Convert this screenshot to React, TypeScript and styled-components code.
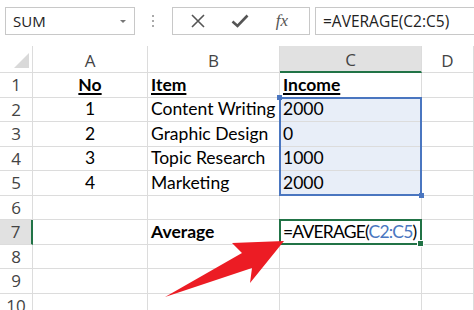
import React from 'react';
import styled, { createGlobalStyle } from 'styled-components';

const GlobalStyle = createGlobalStyle`
  html, body {
    margin: 0;
    padding: 0;
    background: #ffffff;
  }
  body {
    width: 474px;
    height: 310px;
    overflow: hidden;
    font-family: 'Lato', 'Liberation Sans', sans-serif;
  }
`;

const Colors = {
  grid: '#dcdcdc',
  headerText: '#444444',
  headerSelected: '#e1e1e1',
  green: '#217346',
  blue: '#4a76c0',
  selectionFill: '#e8eef8',
  toolbarBorder: '#c8c8c8',
};

const uiFont = `'Open Sans', 'Noto Sans', 'Liberation Sans', sans-serif`;

const Page = styled.div`
  position: relative;
  width: 474px;
  height: 310px;
  overflow: hidden;
`;

/* ---------- formula bar ---------- */

const Toolbar = styled.div`
  display: flex;
  align-items: center;
  height: 46px;
  padding: 7px 0 11px 5px;
  box-sizing: border-box;
`;

const NameBox = styled.div`
  display: flex;
  align-items: center;
  justify-content: space-between;
  width: 130px;
  height: 28px;
  padding: 0 8px 0 7px;
  box-sizing: border-box;
  border: 1px solid ${Colors.toolbarBorder};
  font-family: ${uiFont};
  font-size: 15px;
  color: #222;
`;

const Caret = styled.span`
  width: 0;
  height: 0;
  border-left: 3px solid transparent;
  border-right: 3px solid transparent;
  border-top: 3px solid #777;
`;

const Grip = styled.div`
  display: flex;
  flex-direction: column;
  gap: 3px;
  margin: 0 18px 0 17px;
`;

const GripDot = styled.span`
  width: 2px;
  height: 2px;
  background: #aaa;
`;

const ButtonGroup = styled.div`
  display: flex;
  align-items: center;
  justify-content: space-around;
  width: 138px;
  height: 28px;
  padding: 0 6px 0 4px;
  box-sizing: border-box;
  border: 1px solid ${Colors.toolbarBorder};
`;

const IconSlot = styled.span`
  display: flex;
  align-items: center;
  justify-content: center;
  width: 30px;
  color: #555;
`;

const Fx = styled.span`
  font-family: 'Liberation Serif', 'DejaVu Serif', serif;
  font-style: italic;
  font-size: 17px;
  color: #555;
`;

const FormulaInput = styled.div`
  flex: 1;
  display: flex;
  align-items: center;
  height: 28px;
  margin-left: 5px;
  padding-left: 7px;
  box-sizing: border-box;
  border: 1px solid ${Colors.toolbarBorder};
  border-right: none;
  font-family: ${uiFont};
  font-size: 15.5px;
  color: #222;
  white-space: nowrap;
  overflow: hidden;
`;

/* ---------- sheet ---------- */

const Sheet = styled.div`
  display: grid;
  grid-template-columns: 33px 115px 132px 142px 1fr;
  grid-template-rows: 27px;
  grid-auto-rows: 24.5px;
`;

const Corner = styled.div`
  grid-row: 1;
  grid-column: 1;
  position: relative;
  border-right: 1px solid ${Colors.grid};
  border-bottom: 1px solid ${Colors.grid};
  box-sizing: border-box;

  &::after {
    content: '';
    position: absolute;
    right: 3px;
    bottom: 4px;
    width: 0;
    height: 0;
    border-left: 15px solid transparent;
    border-bottom: 15px solid #d9d9d9;
  }
`;

const ColHeader = styled.div<{ $col: number; $active?: boolean }>`
  grid-row: 1;
  grid-column: ${(p) => p.$col};
  display: flex;
  align-items: center;
  justify-content: center;
  box-sizing: border-box;
  background: ${(p) => (p.$active ? Colors.headerSelected : '#fff')};
  border-right: 1px solid ${Colors.grid};
  border-bottom: ${(p) =>
    p.$active ? `2px solid ${Colors.green}` : `1px solid ${Colors.grid}`};
  font-family: ${uiFont};
  font-size: 17px;
  color: ${Colors.headerText};
  padding-top: 2px;
`;

const RowHeader = styled.div<{ $row: number; $active?: boolean }>`
  grid-row: ${(p) => p.$row};
  grid-column: 1;
  display: flex;
  align-items: center;
  justify-content: center;
  box-sizing: border-box;
  background: ${(p) => (p.$active ? Colors.headerSelected : '#fff')};
  border-right: ${(p) =>
    p.$active ? `2px solid ${Colors.green}` : `1px solid ${Colors.grid}`};
  border-bottom: 1px solid ${Colors.grid};
  font-family: ${uiFont};
  font-size: 17px;
  color: ${Colors.headerText};
`;

const Cell = styled.div<{
  $row: number;
  $col: number;
  $align?: 'left' | 'center';
  $bold?: boolean;
  $underline?: boolean;
  $selected?: boolean;
}>`
  grid-row: ${(p) => p.$row};
  grid-column: ${(p) => p.$col};
  display: flex;
  align-items: flex-end;
  justify-content: ${(p) => (p.$align === 'center' ? 'center' : 'flex-start')};
  box-sizing: border-box;
  padding: 0 3px 1px;
  background: ${(p) => (p.$selected ? Colors.selectionFill : '#fff')};
  border-right: 1px solid ${Colors.grid};
  border-bottom: 1px solid ${Colors.grid};
  font-size: 17.5px;
  line-height: 22px;
  font-weight: ${(p) => (p.$bold ? 700 : 400)};
  text-decoration: ${(p) => (p.$underline ? 'underline' : 'none')};
  text-underline-offset: 2px;
  text-decoration-thickness: 2px;
  color: #000;
  white-space: nowrap;
  overflow: visible;
`;

const RangeOutline = styled.div`
  grid-column: 4;
  grid-row: 3 / 7;
  position: relative;
  margin: -1px 0 0 -1px;
  border: 2px solid ${Colors.blue};
  pointer-events: none;
`;

const Handle = styled.span<{ $pos: 'tl' | 'br' }>`
  position: absolute;
  width: 5px;
  height: 5px;
  background: ${Colors.blue};
  ${(p) => (p.$pos === 'tl' ? 'top: -4px; left: -4px;' : 'bottom: -4px; right: -4px;')}
`;

const ActiveOutline = styled.div`
  grid-column: 4;
  grid-row: 8;
  position: relative;
  margin: -1px 0 0 -1px;
  border: 2px solid ${Colors.green};
  pointer-events: none;
`;

const FillHandle = styled.span`
  position: absolute;
  right: -4px;
  bottom: -4px;
  width: 5px;
  height: 5px;
  background: ${Colors.green};
  border: 1px solid #fff;
`;

const Formula = styled.span`
  letter-spacing: -0.8px;
`;

const Ref = styled.span`
  color: ${Colors.blue};
`;

const Arrow = styled.svg`
  position: absolute;
  left: 0;
  top: 0;
  pointer-events: none;
`;

type Row = {
  no?: string;
  item?: string;
  income?: React.ReactNode;
  header?: boolean;
};

const rows: Row[] = [
  { no: 'No', item: 'Item', income: 'Income', header: true },
  { no: '1', item: 'Content Writing', income: '2000' },
  { no: '2', item: 'Graphic Design', income: '0' },
  { no: '3', item: 'Topic Research', income: '1000' },
  { no: '4', item: 'Marketing', income: '2000' },
  {},
  {
    item: 'Average',
    income: (
      <Formula>
        =AVERAGE(<Ref>C2:C5</Ref>)
      </Formula>
    ),
  },
  {},
  {},
  {},
];

export default function App() {
  return (
    <Page>
      <GlobalStyle />
      <Toolbar>
        <NameBox>
          SUM
          <Caret />
        </NameBox>
        <Grip>
          <GripDot />
          <GripDot />
          <GripDot />
        </Grip>
        <ButtonGroup>
          <IconSlot>
            <svg width="16" height="16" viewBox="0 0 16 16">
              <path d="M2 2 L14 14 M14 2 L2 14" stroke="#555" strokeWidth="1.6" />
            </svg>
          </IconSlot>
          <IconSlot>
            <svg width="18" height="14" viewBox="0 0 18 14">
              <path d="M1.5 7.5 L6.5 12 L16.5 1.5" stroke="#555" strokeWidth="2.6" fill="none" />
            </svg>
          </IconSlot>
          <IconSlot>
            <Fx>fx</Fx>
          </IconSlot>
        </ButtonGroup>
        <FormulaInput>=AVERAGE(C2:C5)</FormulaInput>
      </Toolbar>

      <Sheet>
        <Corner />
        {['A', 'B', 'C', 'D'].map((c, i) => (
          <ColHeader key={c} $col={i + 2} $active={c === 'C'}>
            {c}
          </ColHeader>
        ))}

        {rows.map((r, i) => {
          const n = i + 1;
          const gr = n + 1;
          const inRange = n >= 2 && n <= 5;
          return (
            <React.Fragment key={n}>
              <RowHeader $row={gr} $active={n === 7}>
                {n}
              </RowHeader>
              <Cell $row={gr} $col={2} $align="center" $bold={r.header} $underline={r.header}>
                {r.no}
              </Cell>
              <Cell $row={gr} $col={3} $bold={r.header || n === 7} $underline={r.header}>
                {r.item}
              </Cell>
              <Cell $row={gr} $col={4} $bold={r.header} $underline={r.header} $selected={inRange}>
                {r.income}
              </Cell>
              <Cell $row={gr} $col={5} />
            </React.Fragment>
          );
        })}

        <RangeOutline>
          <Handle $pos="tl" />
          <Handle $pos="br" />
        </RangeOutline>
        <ActiveOutline>
          <FillHandle />
        </ActiveOutline>
      </Sheet>

      <Arrow width="474" height="310" viewBox="0 0 474 310">
        <polygon
          points="284,241 232,243 242,253 165,297 252,268 250,283"
          fill="#ec1c24"
        />
      </Arrow>
    </Page>
  );
}
